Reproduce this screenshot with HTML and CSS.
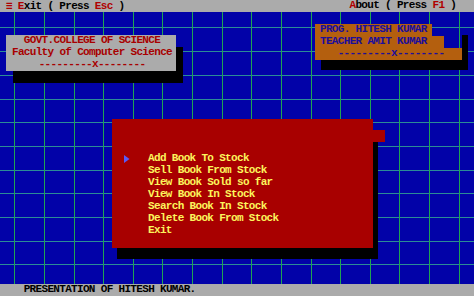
FILE: index.html
```html
<!DOCTYPE html>
<html lang="en">
<head>
<meta charset="utf-8">
<title>Book Stock</title>
<link rel="stylesheet" href="styles.css">
</head>
<body>
  <header class="menubar">
    <div class="menubar-left"><span class="sys hot">≡</span> <span class="hot">E</span>xit ( Press <span class="hot">Esc</span> )</div>
    <div class="menubar-right"><span class="hot">A</span>bout ( Press <span class="hot">F1</span> )</div>
  </header>

  <main class="desk">
    <section class="win win-college">
      <div class="row">GOVT.COLLEGE OF SCIENCE</div>
      <div class="row">Faculty of Computer Science</div>
      <div class="row">---------x--------</div>
    </section>

    <section class="win win-credits">
      <div class="row cr-1">PROG. HITESH KUMAR</div>
      <div class="row cr-2">TEACHER AMIT KUMAR</div>
      <div class="row cr-3">---------x--------</div>
    </section>

    <section class="win win-menu">
      <ul class="menu">
        <li class="menu-item"><span class="marker"><svg width="6" height="8" viewBox="0 0 6 8"><polygon points="0,0 5.5,4 0,8" fill="#5a5af6"/></svg></span>Add Book To Stock</li>
        <li class="menu-item"><span class="marker"></span>Sell Book From Stock</li>
        <li class="menu-item"><span class="marker"></span>View Book Sold so far</li>
        <li class="menu-item"><span class="marker"></span>View Book In Stock</li>
        <li class="menu-item"><span class="marker"></span>Search Book In Stock</li>
        <li class="menu-item"><span class="marker"></span>Delete Book From Stock</li>
        <li class="menu-item"><span class="marker"></span>Exit</li>
      </ul>
    </section>
  </main>

  <footer class="status">PRESENTATION OF HITESH KUMAR.</footer>
</body>
</html>
```
FILE: styles.css
```css
* { box-sizing: border-box; }

html, body { margin: 0; padding: 0; }

body {
  width: 474px;
  height: 296px;
  overflow: hidden;
  display: flex;
  flex-direction: column;
  font-family: "Liberation Mono", "DejaVu Sans Mono", monospace;
  font-weight: bold;
  font-size: 11px;
  line-height: 11.85px;
  letter-spacing: -0.675px;
  background-color: #0202a8;
  background-image:
    repeating-linear-gradient(to right, transparent 0 14.3px, #1fa552 14.3px 15.3px, transparent 15.3px 29.625px),
    repeating-linear-gradient(to bottom, transparent 0 3.7px, #2c8c96 3.7px 4.7px, transparent 4.7px 23.7px);
}

.hot { color: #b00000; }

.sys {
  display: inline-block;
  width: 5.925px;
  text-align: center;
  font-family: "DejaVu Sans Mono", monospace;
  letter-spacing: 0;
}

.menubar {
  height: 11.85px;
  flex: none;
  display: flex;
  justify-content: space-between;
  padding: 0 17.8px 0 5.925px;
  background: #ababab;
  color: #000;
}

.menubar-left,
.menubar-right,
.row,
.menu-item,
.status { white-space: pre; }

.desk {
  flex: 1;
  position: relative;
}

.status {
  height: 11.85px;
  flex: none;
  padding-left: 23.7px;
  background: #ababab;
  color: #000;
}

.row { height: 11.85px; }

.win { position: absolute; }

.win-college {
  left: 6px;
  top: 23.15px;
  width: 170px;
  padding-left: 2px;
  background: #ababab;
  color: #a80000;
  text-align: center;
  box-shadow: 7px 12px 0 #000;
}

.win-credits {
  left: 315px;
  top: 12.15px;
  width: 147px;
  color: #1c0e9a;
}

/* L-shaped drop shadow: right strip and bottom strip */
.win-credits::before {
  content: "";
  position: absolute;
  left: 147px;
  top: 11px;
  width: 6px;
  height: 35px;
  background: #000;
}

.win-credits::after {
  content: "";
  position: absolute;
  left: 6px;
  top: 35.55px;
  width: 147px;
  height: 10.45px;
  background: #000;
}

.win-credits .row {
  background: #b45f0e;
  padding-left: 5px;
}

.cr-1 { width: 117px; }
.cr-2 { width: 129px; }
.cr-3 { width: 147px; text-align: center; padding-left: 2px; }

.win-menu {
  left: 112px;
  top: 107.15px;
  width: 261px;
  height: 129.5px;
  padding: 34.5px 0 0 12.4px;
  background: #a80000;
  color: #fcf45c;
  box-shadow: 5px 11px 0 #000;
}

.win-menu::after {
  content: "";
  position: absolute;
  left: 100%;
  top: 11px;
  width: 12px;
  height: 11.7px;
  background: #a80000;
}

.menu {
  list-style: none;
  margin: 0;
  padding: 0;
}

.menu-item {
  display: flex;
  align-items: center;
  height: 11.85px;
}

.marker {
  display: flex;
  align-items: center;
  width: 23.7px;
  flex: none;
}

.marker svg { display: block; }
```
